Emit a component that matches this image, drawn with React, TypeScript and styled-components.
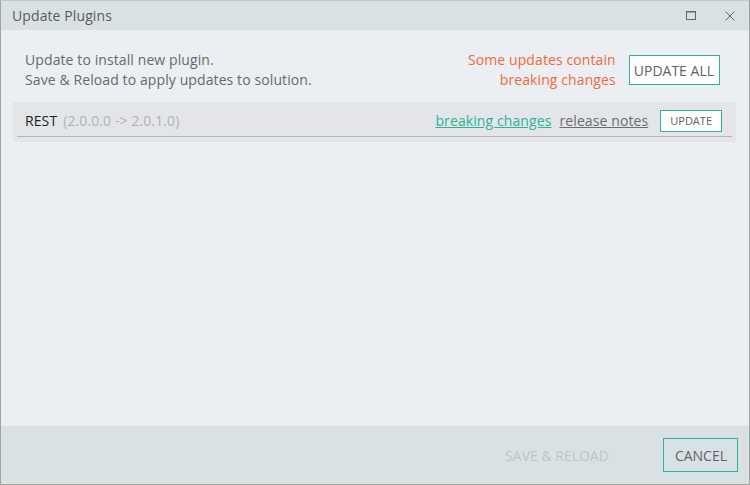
import React from 'react';
import styled, { createGlobalStyle } from 'styled-components';

const GlobalStyle = createGlobalStyle`
  html, body {
    margin: 0;
    padding: 0;
    background: #ffffff;
  }
  body {
    font-family: "Open Sans", "Noto Sans", sans-serif;
  }
`;

const UpdatePluginsDialog: React.FC = () => {
  return (
    <Window>
      <TitleBar>
        <Title>Update Plugins</Title>
        <WindowControls>
          <ControlButton aria-label="maximize">
            <svg width="10" height="10" viewBox="0 0 10 10">
              <rect x="0.5" y="0.5" width="9" height="8" fill="none" stroke="#666" strokeWidth="1" />
              <line x1="0" y1="1" x2="10" y2="1" stroke="#666" strokeWidth="1" />
            </svg>
          </ControlButton>
          <ControlButton aria-label="close">
            <svg width="10" height="10" viewBox="0 0 10 10">
              <path d="M0.5 0.5 L9.5 9.5 M9.5 0.5 L0.5 9.5" stroke="#666" strokeWidth="1" fill="none" />
            </svg>
          </ControlButton>
        </WindowControls>
      </TitleBar>

      <Content>
        <Header>
          <Intro>
            <div>Update to install new plugin.</div>
            <div>Save &amp; Reload to apply updates to solution.</div>
          </Intro>
          <Warning>
            <div>Some updates contain</div>
            <div>breaking changes</div>
          </Warning>
          <OutlineButton $size="large">UPDATE ALL</OutlineButton>
        </Header>

        <PluginList>
          <PluginRow>
            <PluginRowInner>
              <PluginName>REST</PluginName>
              <PluginVersion>(2.0.0.0 -&gt; 2.0.1.0)</PluginVersion>
              <RowActions>
                <Link $tone="accent">breaking changes</Link>
                <Link $tone="muted">release notes</Link>
                <OutlineButton $size="small">UPDATE</OutlineButton>
              </RowActions>
            </PluginRowInner>
          </PluginRow>
        </PluginList>
      </Content>

      <Footer>
        <TextButton disabled>SAVE &amp; RELOAD</TextButton>
        <OutlineButton $size="footer">CANCEL</OutlineButton>
      </Footer>
    </Window>
  );
};

export default function App() {
  return (
    <>
      <GlobalStyle />
      <UpdatePluginsDialog />
    </>
  );
}

// Styled components
const Window = styled.div`
  box-sizing: border-box;
  width: 750px;
  height: 485px;
  display: flex;
  flex-direction: column;
  border: 1px solid #a3a3a3;
  border-top-color: #c4c8cc;
  background: #ebeef2;
  font-family: "Open Sans", "Noto Sans", sans-serif;
  letter-spacing: 0.1px;
`;

const TitleBar = styled.div`
  height: 29px;
  flex: 0 0 29px;
  display: flex;
  align-items: center;
  justify-content: space-between;
  background: #dae1e4;
  padding-left: 11px;
`;

const Title = styled.div`
  font-size: 14px;
  color: #5a5a5a;
`;

const WindowControls = styled.div`
  display: flex;
  height: 100%;
`;

const ControlButton = styled.button`
  width: 39px;
  height: 100%;
  border: none;
  background: transparent;
  display: flex;
  align-items: center;
  justify-content: center;
  padding: 0;
  cursor: pointer;
`;

const Content = styled.div`
  flex: 1;
  display: flex;
  flex-direction: column;
  padding: 18px 13px 0 12px;
`;

const Header = styled.div`
  display: flex;
  align-items: center;
  padding: 0 16px 0 12px;
  height: 44px;
  margin-bottom: 10px;
`;

const Intro = styled.div`
  flex: 1;
  font-size: 14px;
  line-height: 20px;
  color: #666a6e;
`;

const Warning = styled.div`
  text-align: right;
  font-size: 14px;
  line-height: 20px;
  color: #f26a35;
  margin-right: 13px;
`;

const sizes = {
  large: 'height: 30px; padding: 0 5px 0 4px; font-size: 14px;',
  small: 'height: 22px; padding: 0 9px; font-size: 11px;',
  footer: 'height: 34px; padding: 0 10px 0 11px; font-size: 14px;',
} as const;

const OutlineButton = styled.button<{ $size: keyof typeof sizes }>`
  box-sizing: border-box;
  ${p => sizes[p.$size]}
  border: 1px solid #2db397;
  background: ${p => (p.$size === 'footer' ? 'transparent' : '#ffffff')};
  color: #5f6368;
  font-family: inherit;
  letter-spacing: 0;
  cursor: pointer;
  display: flex;
  align-items: center;
`;

const PluginList = styled.div`
  display: flex;
  flex-direction: column;
`;

const PluginRow = styled.div`
  background: #e3e5e9;
  padding: 0 4px 5px 4px;
`;

const PluginRowInner = styled.div`
  box-sizing: border-box;
  display: flex;
  align-items: center;
  height: 35px;
  padding: 3px 10px 0 8px;
  border-bottom: 1px solid #b3b5b8;
  font-size: 14px;
`;

const PluginName = styled.span`
  color: #1e1e1e;
  margin-right: 6px;
`;

const PluginVersion = styled.span`
  color: #b0b2b5;
`;

const RowActions = styled.div`
  margin-left: auto;
  display: flex;
  align-items: center;
  gap: 8px;
`;

const Link = styled.a<{ $tone: 'accent' | 'muted' }>`
  color: ${p => (p.$tone === 'accent' ? '#2db397' : '#6a6d70')};
  text-decoration: underline;
  cursor: pointer;
  &:last-of-type {
    margin-right: 4px;
  }
`;

const Footer = styled.div`
  flex: 0 0 58px;
  display: flex;
  align-items: center;
  justify-content: flex-end;
  gap: 28px;
  padding-right: 11px;
  background: #dae1e4;
`;

const TextButton = styled.button`
  border: none;
  background: transparent;
  font-family: inherit;
  font-size: 14px;
  color: #5f6368;
  padding: 0 26px;
  &:disabled {
    color: #bfc4c8;
  }
`;
